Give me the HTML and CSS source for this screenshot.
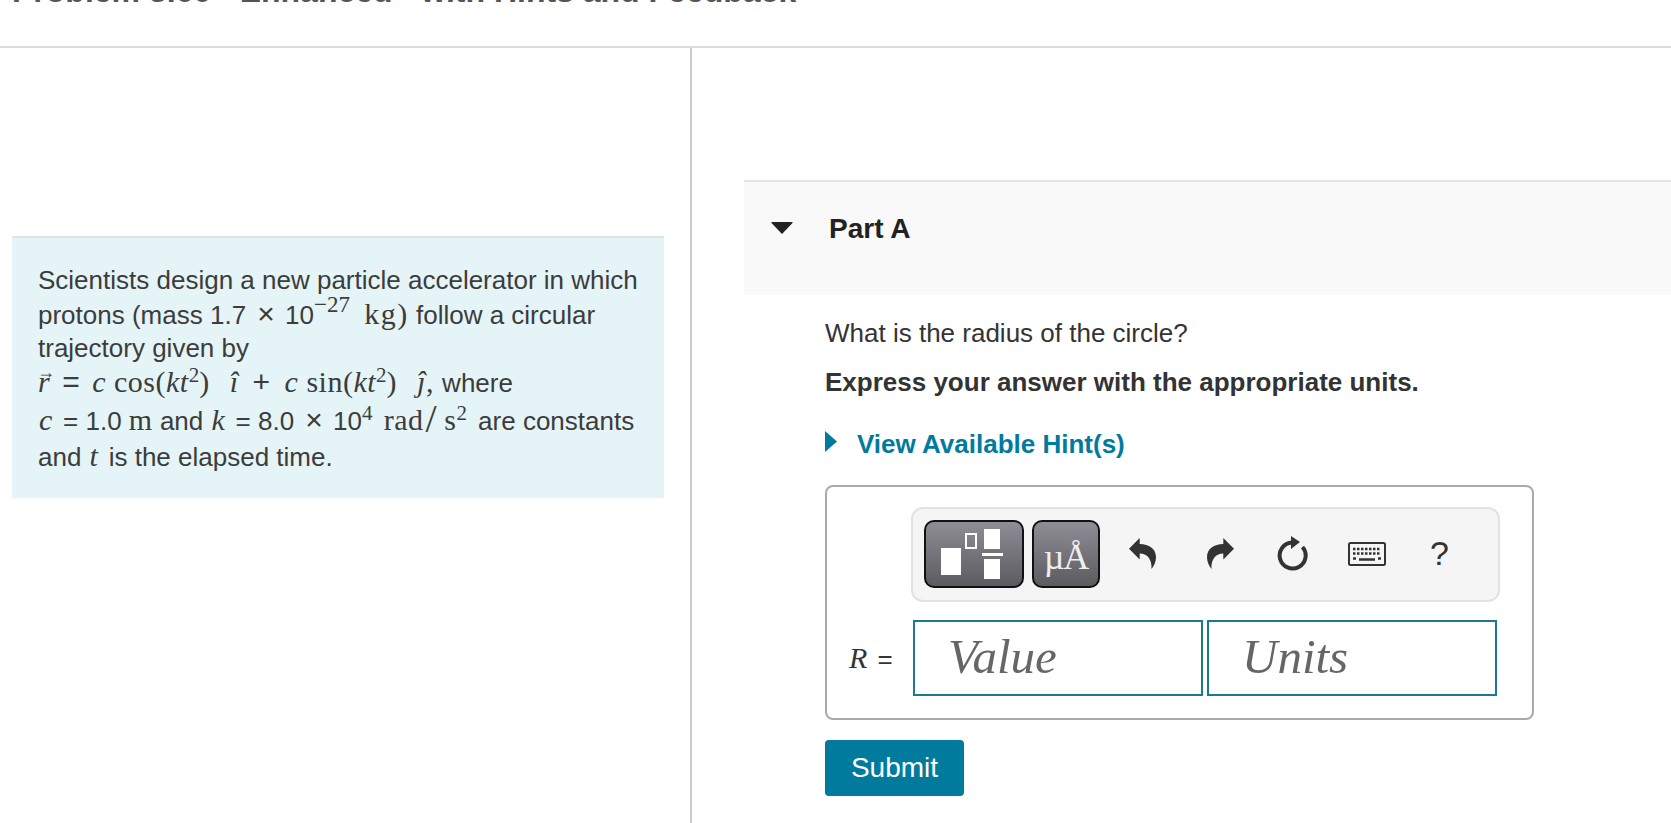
FILE: index.html
```html
<!DOCTYPE html>
<html lang="en">
<head>
    <meta charset="UTF-8" />
    <meta name="viewport" content="width=device-width, initial-scale=1.0"/>
    <title>Problem 3.60 - Enhanced - with Hints and Feedback</title>
    <link rel="stylesheet" href="styles.css">
</head>
<body>

<header class="page-head">
    <h1>Problem 3.60 - Enhanced - with Hints and Feedback</h1>
</header>

<div class="main-content">
    <div class="left-col">
        <div class="intro">
            <div class="line">Scientists design a new particle accelerator in which</div>
            <div class="line">protons (mass 1.7 <span class="times">&times;</span> 10<sup class="exp big">&minus;27</sup> <span class="m unit">kg)</span> follow a circular</div>
            <div class="line">trajectory given by</div>
            <div class="line"><span class="m expr"><i class="vec">r</i> <span class="op">=</span> <i>c</i> cos(<i>kt</i><sup class="exp">2</sup>) <i class="gap">&icirc;</i> <span class="op plus">+</span> <i>c</i> sin(<i>kt</i><sup class="exp">2</sup>) <i class="gap">&#309;</i>,</span> where</div>
            <div class="line tall"><i class="m var">c</i> = 1.0 <span class="m">m</span> and <i class="m var">k</i> = 8.0 <span class="times">&times;</span> 10<sup class="exp">4</sup> <span class="m rate">rad<span class="slash">/</span>s<sup class="exp">2</sup></span> are constants</div>
            <div class="line last">and <i class="m var">t</i> is the elapsed time.</div>
        </div>
    </div>

    <div class="right-col">
        <div class="part-head">
            <svg class="part-arrow" width="22" height="12" viewBox="0 0 22 12"><path d="M1 0h20q1 0 .5 1L11.500 11.500q-.5.5-1 0L.5 1Q0 0 1 0z" fill="#222"/></svg>
            <h2>Part A</h2>
        </div>

        <div class="part-body">
            <p class="question">What is the radius of the circle?</p>
            <p class="instruction">Express your answer with the appropriate units.</p>
            <div class="hint">
                <svg class="hint-arrow" width="12" height="21" viewBox="0 0 12 21"><path d="M0 0l12 10.500L0 21z" fill="#007B9E"/></svg>
                <a href="#">View Available Hint(s)</a>
            </div>

            <div class="answer-box">
                <div class="toolbar">
                    <button class="tool-btn templates" type="button">
                        <svg width="62" height="50" viewBox="0 0 62 50">
                            <rect x="0" y="19" width="20" height="27" fill="#fff"/>
                            <rect x="25" y="5" width="10" height="14" fill="none" stroke="#fff" stroke-width="2"/>
                            <rect x="43" y="0" width="16" height="20" fill="#fff"/>
                            <rect x="41" y="24" width="21" height="3" fill="#fff"/>
                            <rect x="43" y="30" width="16" height="20" fill="#fff"/>
                        </svg>
                    </button>
                    <button class="tool-btn symbols" type="button">&micro;&#8491;</button>

                    <span class="tool-icon undo">
                        <svg width="28" height="32" viewBox="0 0 28 32"><path d="M0 10.700L10.700 0v6C20 6 27 11 27 19c0 5-2 9-4.500 12C23 22 19 15.500 10.700 15.500v6z" fill="#333"/></svg>
                    </span>
                    <span class="tool-icon redo">
                        <svg width="28" height="32" viewBox="0 0 28 32"><path d="M28 10.700L17.300 0v6C8 6 1 11 1 19c0 5 2 9 4.500 12C5 22 9 15.500 17.300 15.500v6z" fill="#333"/></svg>
                    </span>
                    <span class="tool-icon reload">
                        <svg width="32" height="36" viewBox="0 0 32 36"><path d="M16 6.500A13 13 0 1 0 26.500 11" fill="none" stroke="#333" stroke-width="4"/><path d="M15 0l9 6-9 7z" fill="#333"/></svg>
                    </span>
                    <span class="tool-icon keyboard">
                        <svg width="38" height="24" viewBox="0 0 38 24">
                            <rect x="1" y="1" width="36" height="22" rx="1.500" fill="#f5f5f5" stroke="#333" stroke-width="2"/>
                            <path d="M5 7h28M5 11.500h28" stroke="#333" stroke-width="2.500" stroke-dasharray="2.500 1.500"/>
                            <path d="M5 16.500h3M30 16.500h3M11 17.500h16" stroke="#333" stroke-width="2.500"/>
                        </svg>
                    </span>
                    <span class="tool-help">?</span>
                </div>

                <div class="answer-row">
                    <label class="answer-label" for="value"><i>R</i> =</label>
                    <input id="value" class="answer-input" type="text" placeholder="Value">
                    <input id="units" class="answer-input" type="text" placeholder="Units">
                </div>
            </div>

            <button class="submit" type="button">Submit</button>
        </div>
    </div>
</div>

</body>
</html>
```
FILE: styles.css
```css
* {
  margin: 0;
  padding: 0;
  box-sizing: border-box;
  font-family: 'Liberation Sans', Arial, sans-serif;
}

html, body {
  height: 100%;
  overflow: hidden;
}

body {
  background: #fff;
  color: #333;
  display: flex;
  flex-direction: column;
}

.page-head {
  height: 48px;
  flex: none;
  overflow: hidden;
  border-bottom: 2px solid #dcdcdc;
}

.page-head h1 {
  margin-top: -28px;
  padding-left: 12px;
  font-size: 32px;
  line-height: 38px;
  font-weight: 700;
  color: #555;
}

.main-content {
  flex: 1;
  display: flex;
  min-height: 0;
}

.left-col {
  width: 692px;
  flex: none;
  padding: 188px 26px 0 12px;
  border-right: 2px solid #c5cdd1;
}

.intro {
  background: #e5f4f6;
  border-top: 2px solid #dde3e3;
  height: 262px;
  padding: 25px 26px 0;
  font-size: 26px;
  color: #3c3c3c;
}

.line {
  height: 34px;
  line-height: 34px;
  white-space: nowrap;
}

.line.tall {
  margin-top: 4px;
}

.line.last {
  margin-top: 2px;
}

.m, .m i, .m sup {
  font-family: 'Liberation Serif', serif;
}

.intro .m {
  font-size: 30px;
  letter-spacing: 0.5px;
}

.times {
  margin: 0 3px 0 4px;
  font-size: 30px;
  line-height: 0;
  font-weight: 400;
}

.op {
  margin: 0 4px;
}

.op.plus {
  margin: 0 6px;
}

.gap {
  margin-left: 12px;
}

.intro .unit {
  margin-left: 7px;
  letter-spacing: 1.5px;
}

.expr {
  margin-right: 1px;
}

.var {
  margin: 0 3px 0 1px;
}

.rate {
  margin: 0 4px 0 4px;
}

.slash {
  margin: 0 7px 0 2px;
  font-family: 'Liberation Serif', serif;
  font-size: 40px;
  line-height: 0;
  vertical-align: -2px;
}

.intro .exp {
  font-family: 'Liberation Serif', serif;
  font-size: 21px;
  line-height: 0;
  letter-spacing: 0;
  vertical-align: 10px;
}

.intro .exp.big {
  font-size: 23px;
  vertical-align: 12px;
}

.vec {
  position: relative;
}

.vec::before {
  content: "\2192";
  position: absolute;
  left: -1px;
  top: -10px;
  font-family: 'Liberation Sans', sans-serif;
  font-style: normal;
  font-size: 18px;
}

.right-col {
  flex: 1;
  min-width: 0;
  padding: 132px 0 0 52px;
}

.part-head {
  height: 115px;
  background: #f9f9f9;
  border-top: 2px solid #e5e5e5;
  display: flex;
  align-items: flex-start;
  padding: 31px 0 0 27px;
}

.part-arrow {
  margin-top: 9px;
}

.part-head h2 {
  margin-left: 36px;
  font-size: 28px;
  line-height: 32px;
  color: #222;
}

.part-body {
  padding: 20px 0 0 81px;
}

.question {
  font-size: 26px;
  line-height: 36px;
}

.instruction {
  margin-top: 13px;
  font-size: 26px;
  line-height: 36px;
  font-weight: 700;
}

.hint {
  margin-top: 26px;
  display: flex;
  align-items: center;
  gap: 20px;
  height: 36px;
}

.hint-arrow {
  margin-top: -5px;
}

.hint a {
  font-size: 26px;
  font-weight: 700;
  color: #007B9E;
  text-decoration: none;
}

.answer-box {
  margin-top: 23px;
  width: 709px;
  height: 235px;
  border: 2px solid #aaa;
  border-radius: 8px;
  padding: 20px 34px 0 84px;
}

.toolbar {
  width: 589px;
  height: 95px;
  background: #f5f5f5;
  border: 2px solid #e2e2e2;
  border-radius: 12px;
  display: flex;
  align-items: center;
  padding: 0 0 2px 11px;
}

.tool-btn {
  height: 68px;
  border: 2px solid #111;
  border-radius: 10px;
  background: linear-gradient(#8f8d96, #5c5b5f);
  color: #eee;
  display: flex;
  align-items: center;
  justify-content: center;
}

.templates {
  width: 100px;
  padding-right: 5px;
}

.symbols {
  width: 68px;
  margin-left: 8px;
  padding-top: 6px;
  font-family: 'Liberation Serif', serif;
  font-size: 36px;
  letter-spacing: -1px;
}

.tool-icon {
  display: flex;
  align-items: center;
  justify-content: center;
}

.undo {
  margin-left: 29px;
}

.redo {
  margin-left: 49px;
}

.reload {
  margin-left: 42px;
}

.keyboard {
  margin-left: 40px;
}

.tool-help {
  margin-left: 44px;
  font-size: 34px;
  color: #333;
}

.answer-row {
  margin-top: 18px;
  display: flex;
  align-items: center;
}

.answer-label {
  width: 86px;
  font-size: 26px;
  padding-left: 22px;
  margin-left: -84px;
  flex: none;
  white-space: nowrap;
}

.answer-label i {
  margin-right: 3px;
  font-family: 'Liberation Serif', serif;
  font-size: 30px;
}

.answer-input {
  width: 290px;
  height: 76px;
  border: 2px solid #1c7a8e;
  padding: 0 0 3px 33px;
  font-family: 'Liberation Serif', serif;
  font-style: italic;
  font-size: 49px;
  outline: none;
  background: #fff;
}

.answer-input + .answer-input {
  margin-left: 4px;
}

.answer-input::placeholder {
  color: #666;
  opacity: 1;
}

.submit {
  display: block;
  margin-top: 20px;
  width: 139px;
  height: 56px;
  background: #007B9E;
  color: #fff;
  border: none;
  border-radius: 4px;
  font-size: 28px;
}
```
